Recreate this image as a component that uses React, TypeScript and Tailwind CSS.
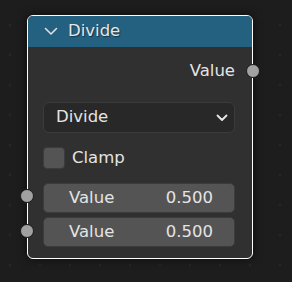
const font = { fontFamily: '"DejaVu Sans", sans-serif' }

function Socket({ side, top }: { side: 'left' | 'right'; top: number }) {
  return (
    <span
      className={`absolute w-[14px] h-[14px] rounded-full bg-[#a1a1a1] border border-[#1a1a1a] ${
        side === 'left' ? 'left-[-8px]' : 'right-[-8px]'
      }`}
      style={{ top }}
    />
  )
}

function ValueField({ label, value }: { label: string; value: string }) {
  return (
    <div className="h-[30px] rounded-[5px] bg-[#545454] border border-[#3c3c3c] flex items-center justify-between pl-[25px] pr-[21px] text-[16.5px] text-[#e4e4e4]">
      <span>{label}</span>
      <span>{value}</span>
    </div>
  )
}

export default function App() {
  return (
    <div
      className="w-[292px] h-[282px] bg-[#1d1d1d] bg-[radial-gradient(circle,#252525_1.5px,transparent_1.6px)] bg-[size:30px_30px] bg-[position:-5px_10px] pl-[27px] pt-[15px]"
      style={font}
    >
      <div className="relative w-[226px] h-[244px] rounded-[6px] border border-white bg-[#303030] shadow-[0_0_10px_rgba(0,0,0,0.6)]">
        <div className="h-[31px] rounded-t-[5px] bg-[#24607f] flex items-center pl-[16px] gap-[10px] text-[16.5px] text-[#e6e6e6] [text-shadow:1px_1px_1px_rgba(0,0,0,0.45)]">
          <svg width="14" height="9" viewBox="0 0 14 9" fill="none">
            <path d="M1.5 1.5 L7 7 L12.5 1.5" stroke="#e0e0e0" strokeWidth="1.6" strokeLinecap="round" strokeLinejoin="round" />
          </svg>
          <span>Divide</span>
        </div>

        <div className="flex flex-col pt-[13px] pl-[15px] pr-[17px]">
          <div className="h-[22px] flex items-center justify-end text-[16.5px] text-[#e4e4e4]">Value</div>

          <div className="mt-[20px] h-[31px] rounded-[6px] bg-[#282828] border border-[#3b3b3b] flex items-center justify-between pl-[12px] pr-[6px] text-[16.5px] text-[#e4e4e4]">
            <span>Divide</span>
            <svg width="12" height="8" viewBox="0 0 12 8" fill="none">
              <path d="M1.5 1.5 L6 6 L10.5 1.5" stroke="#e8e8e8" strokeWidth="1.8" strokeLinecap="round" strokeLinejoin="round" />
            </svg>
          </div>

          <div className="mt-[14px] h-[22px] flex items-center gap-[7px] text-[16.5px] text-[#e4e4e4]">
            <span className="w-[22px] h-[22px] rounded-[4px] bg-[#545454] border border-[#3c3c3c]" />
            <span>Clamp</span>
          </div>

          <div className="mt-[14px] flex flex-col gap-[4px]">
            <ValueField label="Value" value="0.500" />
            <ValueField label="Value" value="0.500" />
          </div>
        </div>

        <Socket side="right" top={48} />
        <Socket side="left" top={173} />
        <Socket side="left" top={208} />
      </div>
    </div>
  )
}
